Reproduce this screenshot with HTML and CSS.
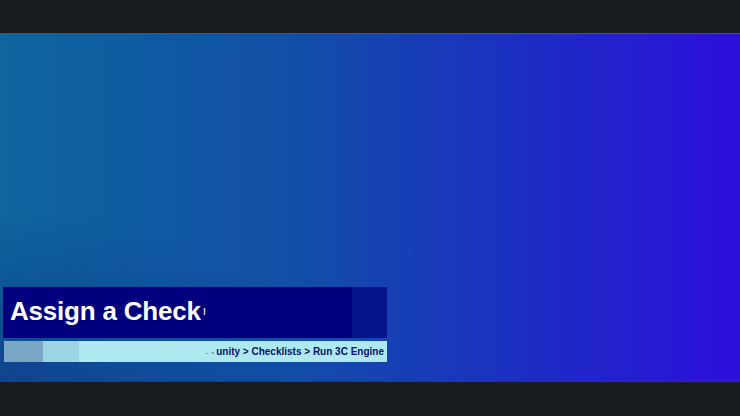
FILE: index.html
```html
<!DOCTYPE html>
<html lang="en">
<head>
    <meta charset="UTF-8" />
    <meta name="viewport" content="width=device-width, initial-scale=1.0" />
    <title>Assign a Checklist</title>
    <link rel="stylesheet" href="styles.css">
</head>
<body>
    <div class="bar-top"></div>
    <div class="stage">
        <div class="lower-third">
            <div class="title-box">
                <h1 class="title">Assign a Check<span class="cursor">ı</span></h1>
            </div>
            <div class="crumb-bar">
                <span class="seg seg-a"></span>
                <span class="seg seg-b"></span>
                <p class="crumb"><span class="dots">-&nbsp; ▪ </span>unity &gt; Checklists &gt; Run 3C Engine</p>
            </div>
        </div>
    </div>
    <div class="bar-bottom"></div>
</body>
</html>
```

FILE: styles.css
```css
body {
        margin: 0;
        padding: 0;
        width: 740px;
        height: 416px;
        overflow: hidden;
        background: #1a1d20;
        font-family: "Liberation Sans", Arial, sans-serif;
        display: flex;
        flex-direction: column;
    }
    .bar-top {
        height: 33px;
        background: #1a1d20;
    }
    .bar-bottom {
        height: 34px;
        background: #1a1d20;
    }
    .stage {
        height: 349px;
        box-sizing: border-box;
        border-top: 1px solid #3d5378;
        border-bottom: 1px solid #34307a;
        background:
            radial-gradient(ellipse 60% 70% at 0% 100%, rgba(16, 40, 130, 0.55), rgba(16, 40, 130, 0) 70%),
            linear-gradient(to right, #0d669c 0%, #124ea8 40%, #1c2fc2 70%, #2c0fdc 100%);
        display: flex;
        flex-direction: column;
        justify-content: flex-end;
        padding: 0 0 19px 3px;
    }
    .lower-third {
        width: 384px;
        display: flex;
        flex-direction: column;
        gap: 3px;
    }
    .title-box {
        height: 51px;
        background: linear-gradient(to right, #00007f 0%, #00007f 90.8%, #08148a 90.8%, #08148a 100%);
        display: flex;
        align-items: center;
        padding-left: 7px;
    }
    .title {
        margin: 0;
        color: #ffffff;
        font-size: 26px;
        font-weight: bold;
        letter-spacing: -0.2px;
        line-height: 1;
        padding-bottom: 4px;
    }
    .cursor {
        font-size: 12px;
        font-weight: normal;
        margin-left: 2px;
        vertical-align: 5px;
    }
    .crumb-bar {
        height: 21px;
        margin-left: 1px;
        background: #aee9f0;
        display: flex;
        align-items: center;
    }
    .seg {
        height: 100%;
    }
    .seg-a {
        width: 39px;
        background: #7aa7c6;
    }
    .seg-b {
        width: 36px;
        background: #9cd6e2;
    }
    .crumb {
        margin: 0 3px 0 auto;
        color: #0a1070;
        font-size: 10px;
        font-weight: bold;
    }
    .dots {
        color: #6f8fb0;
        font-size: 7px;
    }
```
